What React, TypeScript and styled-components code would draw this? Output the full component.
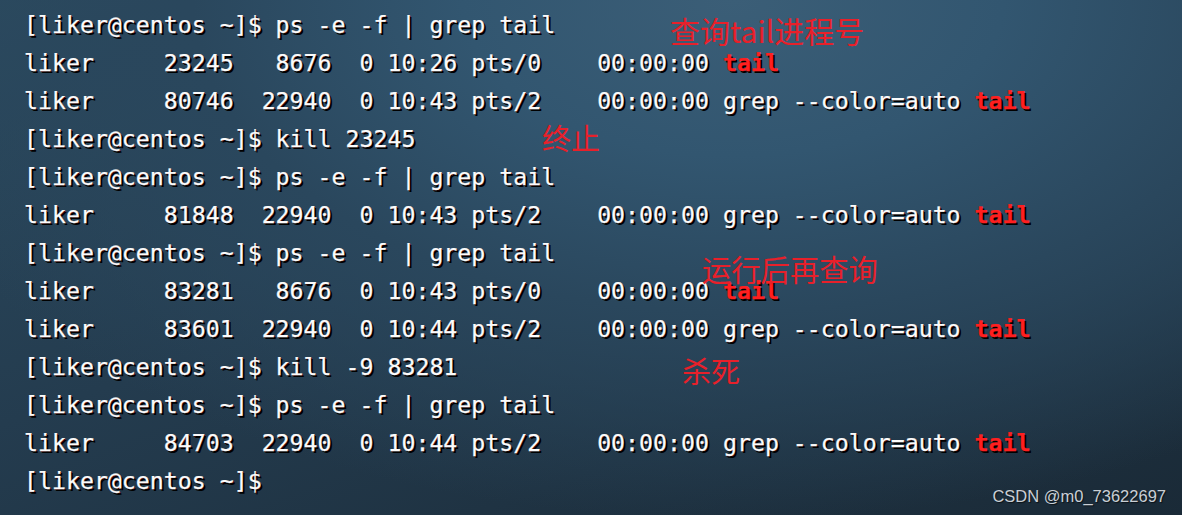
import React from "react";
import styled, { createGlobalStyle } from "styled-components";

const GlobalStyle = createGlobalStyle`
  html, body { margin: 0; padding: 0; }
  body { background: #1e3142; }
`;

const Screen = styled.div`
  position: relative;
  width: 1182px;
  height: 515px;
  overflow: hidden;
  box-sizing: border-box;
  padding: 6px 0 0 24px;
  background:
    radial-gradient(ellipse 900px 520px at 62% 0%, #3b5e77 0%, #325670 30%, #2a475d 60%, rgba(30, 49, 66, 0) 100%),
    linear-gradient(160deg, #2b4a5f 0%, #243c4f 45%, #1a2a37 100%);
`;

const Output = styled.div`
  display: flex;
  flex-direction: column;
`;

const Line = styled.div`
  font-family: "DejaVu Sans Mono", "Liberation Mono", monospace;
  font-size: 23.22px;
  line-height: 38px;
  height: 38px;
  white-space: pre;
  color: #fbfbfb;
  -webkit-text-stroke: 0.25px #fbfbfb;
  text-shadow: 2px 2px 0 #000, 1px 1px 0 #5a0000;
`;

const Match = styled.span`
  color: #ff1f1f;
  font-weight: bold;
  -webkit-text-stroke: 0.25px #ff1f1f;
  text-shadow: 2px 2px 0 #000;
`;

const Note = styled.div<{ $x: number; $y: number; $size: number }>`
  position: absolute;
  left: ${(p) => p.$x}px;
  top: ${(p) => p.$y}px;
  font-family: "Noto Sans CJK SC", "Microsoft YaHei", sans-serif;
  font-size: ${(p) => p.$size}px;
  line-height: 1;
  color: #e8202a;
  white-space: nowrap;
`;

const Watermark = styled.div`
  position: absolute;
  right: 16px;
  bottom: 9px;
  font-family: "Liberation Sans", Arial, sans-serif;
  font-size: 16.5px;
  color: #c9cfd5;
  text-shadow: 1px 1px 1px rgba(0, 0, 0, 0.6);
`;

type Seg = { t: string; hl?: boolean };

const lines: Seg[][] = [
  [{ t: "[liker@centos ~]$ ps -e -f | grep tail" }],
  [{ t: "liker     23245   8676  0 10:26 pts/0    00:00:00 " }, { t: "tail", hl: true }],
  [{ t: "liker     80746  22940  0 10:43 pts/2    00:00:00 grep --color=auto " }, { t: "tail", hl: true }],
  [{ t: "[liker@centos ~]$ kill 23245" }],
  [{ t: "[liker@centos ~]$ ps -e -f | grep tail" }],
  [{ t: "liker     81848  22940  0 10:43 pts/2    00:00:00 grep --color=auto " }, { t: "tail", hl: true }],
  [{ t: "[liker@centos ~]$ ps -e -f | grep tail" }],
  [{ t: "liker     83281   8676  0 10:43 pts/0    00:00:00 " }, { t: "tail", hl: true }],
  [{ t: "liker     83601  22940  0 10:44 pts/2    00:00:00 grep --color=auto " }, { t: "tail", hl: true }],
  [{ t: "[liker@centos ~]$ kill -9 83281" }],
  [{ t: "[liker@centos ~]$ ps -e -f | grep tail" }],
  [{ t: "liker     84703  22940  0 10:44 pts/2    00:00:00 grep --color=auto " }, { t: "tail", hl: true }],
  [{ t: "[liker@centos ~]$" }],
];

export default function App() {
  return (
    <>
      <GlobalStyle />
      <Screen>
        <Output>
          {lines.map((segs, i) => (
            <Line key={i}>
              {segs.map((s, j) => (s.hl ? <Match key={j}>{s.t}</Match> : <React.Fragment key={j}>{s.t}</React.Fragment>))}
            </Line>
          ))}
        </Output>
        <Note $x={670} $y={15} $size={30}>查询tail进程号</Note>
        <Note $x={542} $y={123} $size={29}>终止</Note>
        <Note $x={702} $y={254} $size={29.3}>运行后再查询</Note>
        <Note $x={682} $y={356} $size={29}>杀死</Note>
        <Watermark>CSDN @m0_73622697</Watermark>
      </Screen>
    </>
  );
}
